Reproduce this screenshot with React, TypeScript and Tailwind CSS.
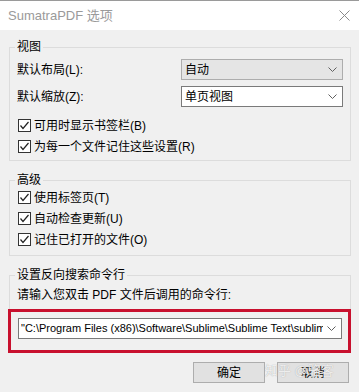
import React from "react";

const font = { fontFamily: '"Liberation Sans", "Noto Sans CJK SC", sans-serif' };

function Chevron() {
  return (
    <svg width="9" height="5" viewBox="0 0 9 5" className="shrink-0">
      <polyline points="0.5,0.5 4.5,4.5 8.5,0.5" fill="none" stroke="#606060" strokeWidth="1" />
    </svg>
  );
}

function Select({ value, disabled }: { value: string; disabled?: boolean }) {
  return (
    <div
      className={`flex items-center justify-between h-[21px] w-[162px] pl-[3px] pr-[5px] border ${
        disabled ? "bg-[#e5e5e5] border-[#adadad]" : "bg-white border-[#7a7a7a]"
      }`}
    >
      <span className="text-[12px] leading-none text-black">{value}</span>
      <Chevron />
    </div>
  );
}

function Check({ label }: { label: string }) {
  return (
    <div className="flex items-center h-[21px] pl-[8px]">
      <div className="w-[13px] h-[13px] border border-[#333] bg-white flex items-center justify-center">
        <svg width="11" height="11" viewBox="0 0 11 11">
          <polyline points="1.5,5.5 4,8.5 9.5,2" fill="none" stroke="#222" strokeWidth="1.2" />
        </svg>
      </div>
      <span className="ml-[3px] text-[12px] leading-none text-black">{label}</span>
    </div>
  );
}

function Group({ title, className = "", children }: { title: string; className?: string; children: React.ReactNode }) {
  return (
    <fieldset className={`ml-[9px] w-[342px] border border-[#dcdcdc] ${className}`}>
      <legend className="ml-[5px] px-[2px] h-[16px] text-[12px] leading-[16px] text-black">{title}</legend>
      {children}
    </fieldset>
  );
}

export default function App() {
  return (
    <div className="w-[359px] h-[392px] bg-[#f0f0f0] relative overflow-hidden" style={font}>
      <div className="h-[1px] bg-[#9a9a9a]" />
      <div className="h-[29px] bg-white flex items-center justify-between pl-[8px] pr-[9px]">
        <span className="text-[13px] text-[#9a9a9a] leading-none">SumatraPDF 选项</span>
        <svg width="11" height="11" viewBox="0 0 11 11">
          <path d="M0.5 0.5 L10.5 10.5 M10.5 0.5 L0.5 10.5" stroke="#8a8a8a" strokeWidth="1" />
        </svg>
      </div>

      <Group title="视图" className="mt-[9px] pb-[3px]">
        <div className="flex items-center justify-between mt-[4px] pl-[7px] pr-[7px]">
          <span className="text-[12px] leading-none text-black">默认布局(L):</span>
          <Select value="自动" disabled />
        </div>
        <div className="flex items-center justify-between mt-[6px] pl-[7px] pr-[7px]">
          <span className="text-[12px] leading-none text-black">默认缩放(Z):</span>
          <Select value="单页视图" />
        </div>
        <div className="mt-[8px]">
          <Check label="可用时显示书签栏(B)" />
          <Check label="为每一个文件记住这些设置(R)" />
        </div>
      </Group>

      <Group title="高级" className="mt-[11px] pb-[5px]">
        <div className="-mt-[1px]">
          <Check label="使用标签页(T)" />
          <Check label="自动检查更新(U)" />
          <Check label="记住已打开的文件(O)" />
        </div>
      </Group>

      <Group title="设置反向搜索命令行" className="mt-[11px] pb-[12px]">
        <div className="mt-[2px] h-[20px] flex items-center pl-[7px]">
          <span className="text-[12px] leading-none text-black">请输入您双击 PDF 文件后调用的命令行:</span>
        </div>
        <div className="mt-[13px] ml-[8px] w-[324px] h-[21px] bg-white border border-[#7a7a7a] flex items-center pl-[2px] pr-[5px]">
          <span className="flex-1 overflow-hidden whitespace-nowrap text-[11px] leading-none text-black">
            "C:\Program Files (x86)\Software\Sublime\Sublime Text\sublime_text.exe" "%f:%l"
          </span>
          <span className="ml-[4px]">
            <Chevron />
          </span>
        </div>
      </Group>

      <div className="flex justify-end gap-[12px] mt-[10px] pr-[10px]">
        <div className="w-[72px] h-[21px] bg-[#e1e1e1] border border-[#adadad] flex items-center justify-center text-[12px] leading-none text-black">
          确定
        </div>
        <div className="w-[72px] h-[21px] bg-[#e1e1e1] border border-[#adadad] flex items-center justify-center text-[12px] leading-none text-black">
          取消
        </div>
      </div>

      <div className="absolute left-[8px] top-[309px] w-[343px] h-[44px] border-[3px] border-[#c8102e]" />
      <div className="absolute left-[265px] top-[364px] text-[13px] leading-none text-white/80 [text-shadow:0_0_1px_#9a9a9a]">
        知乎 @骆客
      </div>
    </div>
  );
}
